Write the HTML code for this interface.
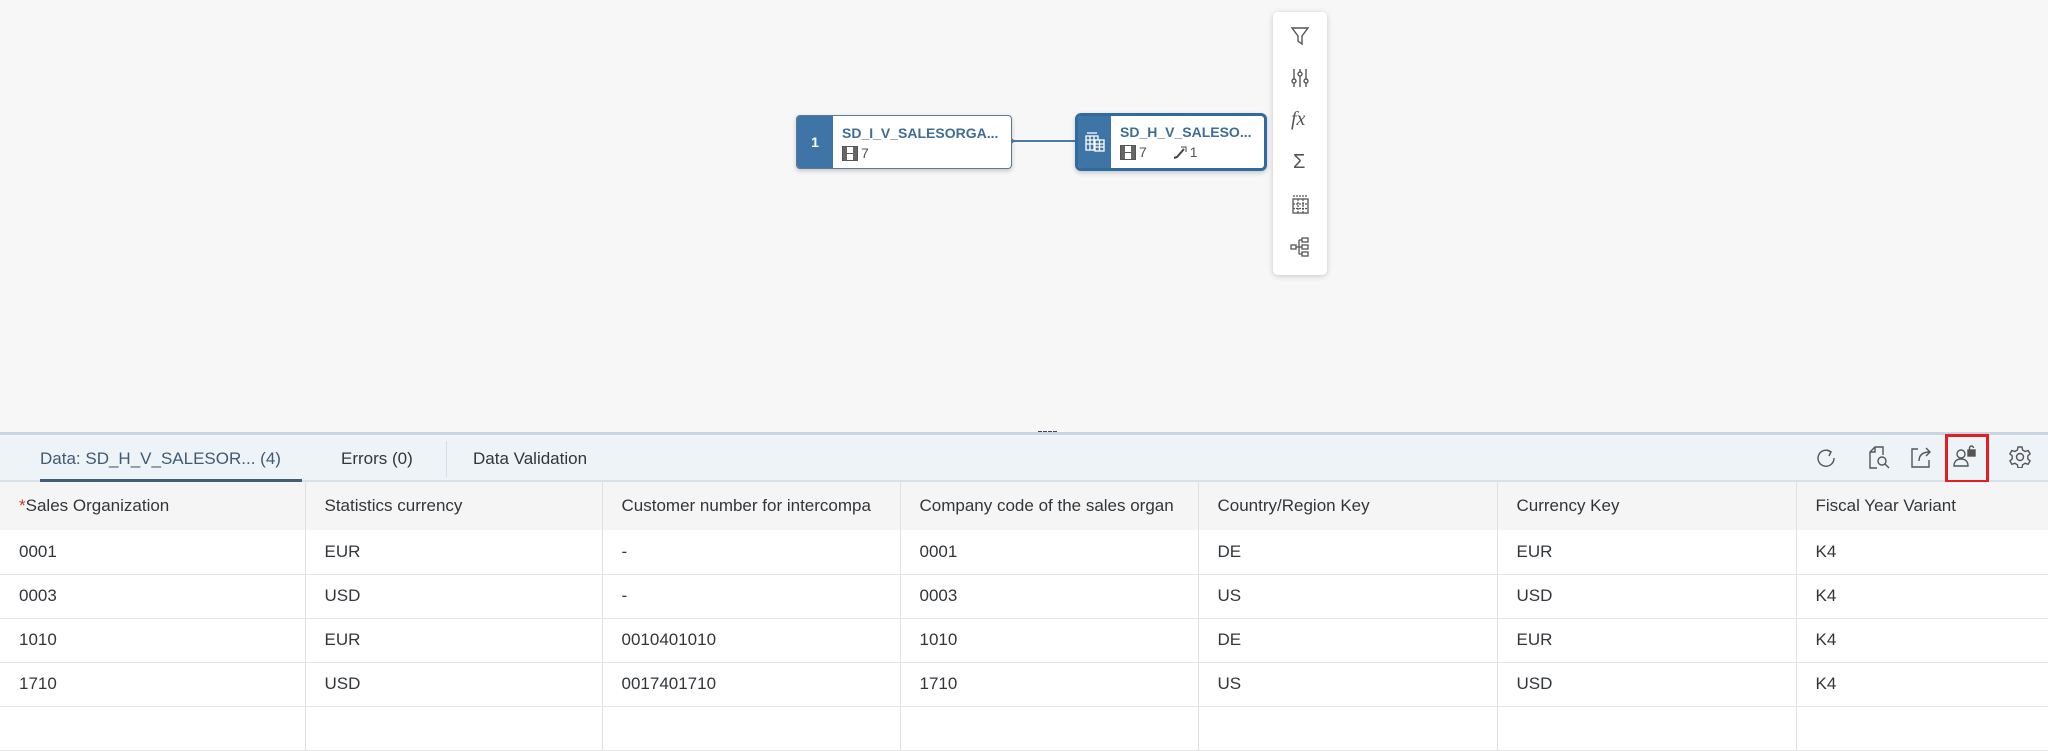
<!DOCTYPE html>
<html><head><meta charset="utf-8"><style>
*{box-sizing:border-box;margin:0;padding:0}
body{width:2048px;height:713px;overflow:hidden;background:#f7f7f7;font-family:"Liberation Sans",sans-serif;color:#32363a;position:relative}
.abs{position:absolute}
.node{position:absolute;background:#fff;border:1px solid #5b7a95;border-radius:4px;box-shadow:0 2px 5px rgba(0,0,0,.2);overflow:hidden}
.node .l{position:absolute;left:0;top:0;bottom:0;width:36px;background:#3f75a6;color:#fff;font-size:14px;font-weight:bold;display:flex;align-items:center;justify-content:center}
.node .t{position:absolute;left:45px;top:9px;font-size:14px;font-weight:bold;color:#3f6d96}
.node .s{position:absolute;left:45px;top:29px;font-size:14px;color:#555;display:flex;align-items:center;gap:3px}
.tb{position:absolute;left:1273px;top:12px;width:54px;height:263px;background:#fff;border-radius:5px;box-shadow:0 1px 6px rgba(0,0,0,.2)}
.tb svg{position:absolute;left:17px}
.tabbar{position:absolute;left:0;top:432px;width:2048px;height:50px;background:#eef3f8;border-top:3px solid #c9d5e0;border-bottom:2px solid #d6e1ec}
.tab{position:absolute;top:14px;font-size:17px;color:#32363a}
table{position:absolute;left:0;top:482px;border-collapse:collapse;width:2048px;font-size:17px;table-layout:fixed;background:#fff}
td{height:44px;padding-left:19px;border-bottom:1px solid #e5e5e5;border-right:1px solid #e0e0e0;white-space:nowrap;overflow:hidden;background:#fff}
tr.h td{background:#f5f5f5;height:48px;border-bottom:none}
</style></head><body>
<div class="abs" style="left:1012px;top:140px;width:63px;height:2px;background:#4d7aa3"></div>
<div class="abs" style="left:1009px;top:136px;width:0;height:0;border-top:5px solid transparent;border-bottom:5px solid transparent;border-left:6px solid #4d7aa3"></div>
<div class="node" style="left:796px;top:115px;width:216px;height:54px">
<div class="l">1</div><div class="t">SD_I_V_SALESORGA...</div>
<div class="s"><svg width="16" height="15"><rect x=".5" y=".5" width="15" height="14" fill="#fff" stroke="#555"/><rect x="1" y="1" width="4" height="13" fill="#666"/><rect x="11" y="1" width="4" height="13" fill="#666"/><line x1="5" y1="7.5" x2="11" y2="7.5" stroke="#555"/></svg>7</div></div>
<div class="node" style="left:1075px;top:113px;width:192px;height:58px;border:3px solid #2f6aa0;border-radius:6px">
<div class="l" style="width:33px"><svg width="20" height="20" viewBox="0 0 20 20" fill="none" stroke="#fff" stroke-width="1.3"><rect x="1" y="4" width="12" height="14"/><path d="M1 8h12M1 12h12M5 4v14M9 4v14M2 1h10"/><rect x="10" y="8" width="9" height="11" fill="#3f75a6"/><path d="M10 12h9M10 15h9M14.5 8v11"/></svg></div>
<div class="t" style="left:42px;top:8px">SD_H_V_SALESO...</div>
<div class="s" style="left:42px;top:28px"><svg width="16" height="15"><rect x=".5" y=".5" width="15" height="14" fill="#fff" stroke="#555"/><rect x="1" y="1" width="4" height="13" fill="#666"/><rect x="11" y="1" width="4" height="13" fill="#666"/><line x1="5" y1="7.5" x2="11" y2="7.5" stroke="#555"/></svg>7<span style="width:20px"></span><svg width="14" height="14" viewBox="0 0 14 14"><path d="M1 13l3-1 7-8" stroke="#444" stroke-width="2" fill="none"/><path d="M8 2h5v5" stroke="#444" fill="none"/></svg>1</div></div>
<div class="tb">
<svg style="top:14px" width="20" height="20" viewBox="0 0 20 20" fill="none" stroke="#555" stroke-width="1.4"><path d="M2 2h16l-6 8v8l-4-3v-5z"/></svg>
<svg style="top:56px" width="20" height="20" viewBox="0 0 20 20" fill="none" stroke="#555" stroke-width="1.4"><path d="M4 1v18M10 1v18M16 1v18"/><circle cx="4" cy="13" r="2" fill="#fff"/><circle cx="10" cy="6" r="2" fill="#fff"/><circle cx="16" cy="13" r="2" fill="#fff"/></svg>
<div class="abs" style="left:18px;top:96px;font:italic 20px 'Liberation Serif',serif;color:#555"><i>fx</i></div>
<div class="abs" style="left:20px;top:139px;font-size:20px;color:#555">Σ</div>
<svg style="top:183px" width="20" height="20" viewBox="0 0 20 20" fill="none" stroke="#555" stroke-width="1.3"><rect x="3" y="4" width="15" height="14"/><path d="M3 9h15M3 13.5h15M8 4v14M13 4v14M3 1h15" stroke-dasharray="2 1"/></svg>
<svg style="top:225px" width="20" height="20" viewBox="0 0 20 20" fill="none" stroke="#555" stroke-width="1.3"><rect x="1" y="8" width="5" height="4"/><rect x="12" y="1" width="6" height="4"/><rect x="12" y="8" width="6" height="4"/><rect x="12" y="15" width="6" height="4"/><path d="M6 10h6M9 3v14M9 3h3M9 17h3"/></svg>
</div>
<div class="abs" style="left:1038px;top:431px;width:4px;height:3px;background:#445;box-shadow:5px 0 #445,10px 0 #445,15px 0 #445"></div>
<div class="tabbar">
<div class="tab" style="left:40px;color:#3f5a73">Data: SD_H_V_SALESOR... (4)</div>
<div class="abs" style="left:40px;top:44px;width:262px;height:3px;background:#3f5e7c"></div>
<div class="tab" style="left:341px">Errors (0)</div>
<div class="abs" style="left:446px;top:6px;width:1px;height:36px;background:#d8dde3"></div>
<div class="tab" style="left:473px">Data Validation</div>
<svg class="abs" style="left:1815px;top:12px" width="22" height="22" viewBox="0 0 22 22" fill="none" stroke="#555" stroke-width="1.4"><path d="M16 5A8 8 0 1 0 19 11"/><path d="M12 3l4 2-2 4"/></svg>
<svg class="abs" style="left:1868px;top:11px" width="22" height="24" viewBox="0 0 22 24" fill="none" stroke="#555" stroke-width="1.4"><path d="M9 22H2V6l5-5h8v8"/><path d="M2 6h5V1"/><circle cx="14" cy="15" r="4"/><path d="M17 18l4 4"/></svg>
<svg class="abs" style="left:1910px;top:11px" width="24" height="22" viewBox="0 0 24 22" fill="none" stroke="#555" stroke-width="1.4"><path d="M8 3H2v18h17v-7"/><path d="M9 15c0-6 4-9 11-9"/><path d="M16 2l4 4-4 4"/></svg>
<div class="abs" style="left:1945px;top:-1px;width:44px;height:49px;border:3px solid #e01e24"></div>
<svg class="abs" style="left:1953px;top:10px" width="26" height="24" viewBox="0 0 26 24" fill="none" stroke="#555" stroke-width="1.4"><circle cx="8" cy="9" r="4"/><path d="M1 21c0-5 3-7 7-7s7 2 7 7z"/><rect x="15" y="5" width="7" height="6" fill="#555"/><path d="M16.5 5V3a2 2 0 0 1 4 0"/></svg>
<svg class="abs" style="left:2009px;top:11px" width="22" height="22" viewBox="0 0 22 22" fill="none" stroke="#555" stroke-width="1.4"><circle cx="11" cy="11" r="3.5"/><path d="M9 1h4l.6 3 2.6 1.5 2.9-1 2 3.4-2.3 2v3l2.3 2-2 3.4-2.9-1-2.6 1.5-.6 3H9l-.6-3-2.6-1.5-2.9 1-2-3.4 2.3-2v-3l-2.3-2 2-3.4 2.9 1L8.4 4z"/></svg>
</div>
<table>
<colgroup><col style="width:305px"><col style="width:297px"><col style="width:298px"><col style="width:298px"><col style="width:299px"><col style="width:299px"><col style="width:252px"></colgroup>
<tr class="h"><td><span style="color:#d0342c">*</span>Sales Organization</td><td>Statistics currency</td><td>Customer number for intercompa</td><td>Company code of the sales organ</td><td>Country/Region Key</td><td>Currency Key</td><td style="border-right:none">Fiscal Year Variant</td></tr>
<tr><td>0001</td><td>EUR</td><td>-</td><td>0001</td><td>DE</td><td>EUR</td><td style="border-right:none">K4</td></tr>
<tr><td>0003</td><td>USD</td><td>-</td><td>0003</td><td>US</td><td>USD</td><td style="border-right:none">K4</td></tr>
<tr><td>1010</td><td>EUR</td><td>0010401010</td><td>1010</td><td>DE</td><td>EUR</td><td style="border-right:none">K4</td></tr>
<tr><td>1710</td><td>USD</td><td>0017401710</td><td>1710</td><td>US</td><td>USD</td><td style="border-right:none">K4</td></tr>
<tr><td></td><td></td><td></td><td></td><td></td><td></td><td style="border-right:none"></td></tr>
</table>
</body></html>
